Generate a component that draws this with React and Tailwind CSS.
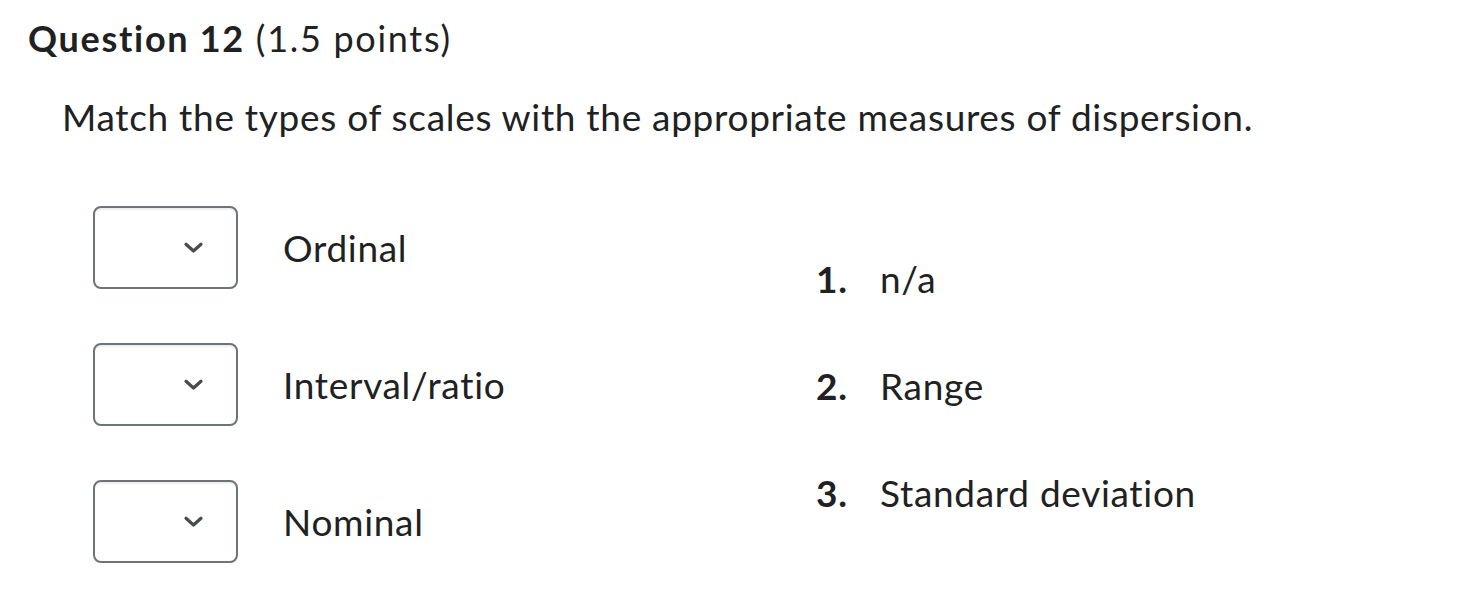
import React from "react";

function Chevron() {
  return (
    <svg width="21" height="12" viewBox="0 0 21 12" fill="none" className="block">
      <path d="M3 2.3 L10.5 9 L18 2.3" stroke="#494c4e" strokeWidth="3.2" strokeLinecap="round" strokeLinejoin="round" />
    </svg>
  );
}

function SelectBox() {
  return (
    <div className="flex h-[83px] w-[145px] shrink-0 items-center justify-end rounded-[8px] border-2 border-[#6e7376] bg-white pr-[32px] shadow-[inset_0_3px_2px_-1px_#eceeef]">
      <Chevron />
    </div>
  );
}

const rows = ["Ordinal", "Interval/ratio", "Nominal"];
const choices = ["n/a", "Range", "Standard deviation"];

export default function App() {
  return (
    <div
      className="min-h-[614px] bg-white text-[#202122] [font-variant-ligatures:none]"
      style={{ fontFamily: "Lato, 'Noto Sans', sans-serif" }}
    >
      <div className="pl-[28px] pt-[12px]">
        <h2 className="text-[36px] leading-[52px] tracking-[1.7px]">
          <span className="font-bold">Question 12</span> <span>(1.5 points)</span>
        </h2>
        <p className="mt-[31px] pl-[34px] text-[37px] leading-[44px] tracking-[0.7px]">
          Match the types of scales with the appropriate measures of dispersion.
        </p>
        <div className="mt-[67px] flex items-center pl-[65px]">
          <div className="flex w-[723px] shrink-0 flex-col gap-[54px]">
            {rows.map((r) => (
              <div key={r} className="flex items-center gap-[45px]">
                <SelectBox />
                <span className="text-[37px] leading-[44px] tracking-[0.7px]">{r}</span>
              </div>
            ))}
          </div>
          <ol className="mt-[3px] flex flex-col gap-[63px]">
            {choices.map((c, i) => (
              <li key={c} className="flex text-[37px] leading-[44px] tracking-[0.7px]">
                <span className="w-[64px] font-bold">{i + 1}.</span>
                <span>{c}</span>
              </li>
            ))}
          </ol>
        </div>
      </div>
    </div>
  );
}
